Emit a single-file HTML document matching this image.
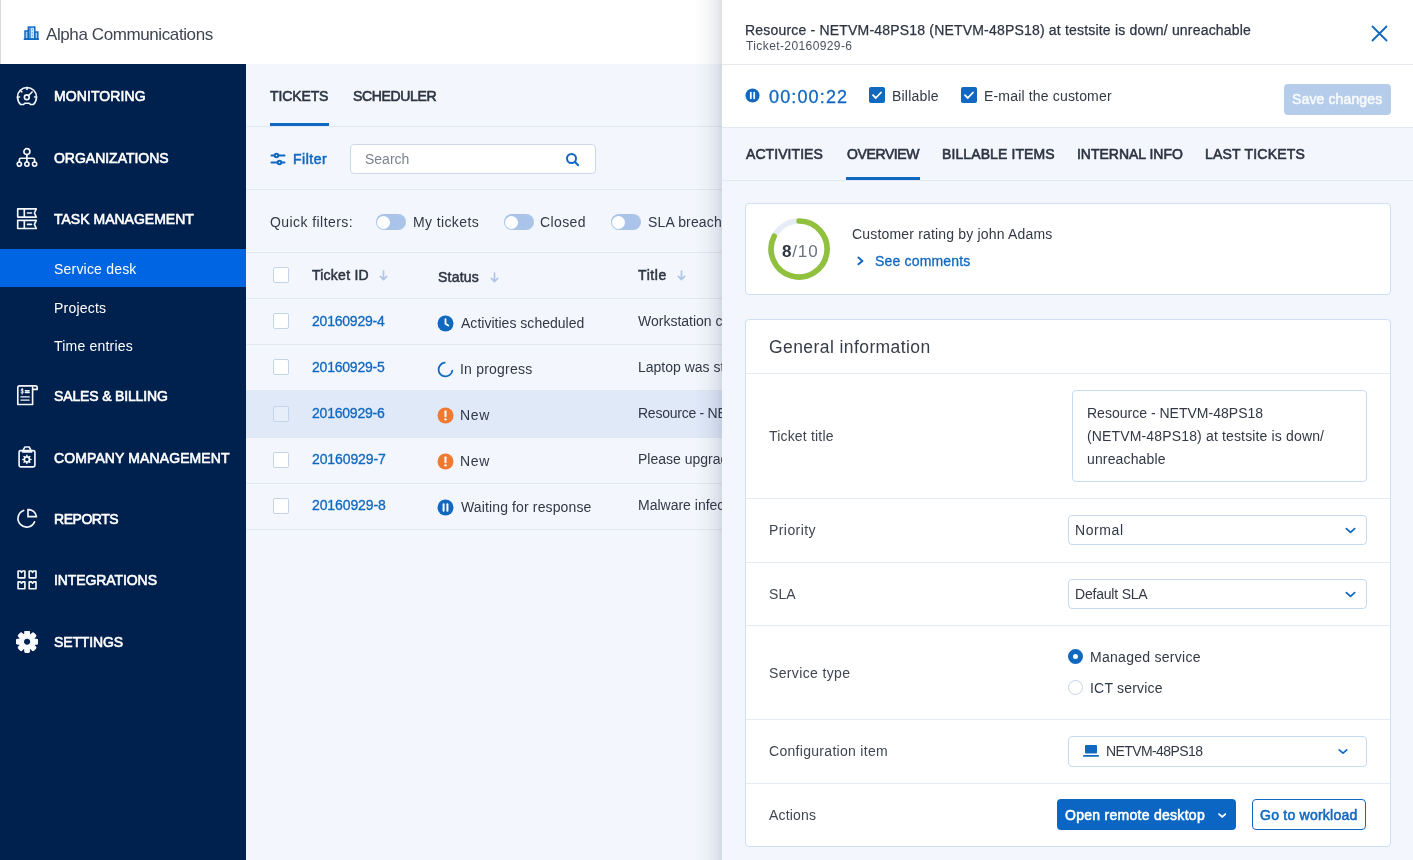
<!DOCTYPE html>
<html lang="en">
<head>
<meta charset="utf-8">
<title>Service desk</title>
<style>
*{box-sizing:border-box;margin:0;padding:0}
html,body{width:1413px;height:860px;overflow:hidden;background:#f3f7fd;font-family:"Liberation Sans",sans-serif;color:#323845}
.abs,.t{position:absolute}
.t{white-space:nowrap;line-height:20px;font-size:14px;transform:translateY(-50%);will-change:transform}
#top{left:0;top:0;width:722px;height:64px;background:#fff;border-left:1px solid #d9dde3}
#side{left:0;top:64px;width:246px;height:796px;background:#00204d}
#side .active{left:0;top:185px;width:246px;height:38px;background:#0065e3}
#side .nav{left:54px;color:#fff;font-size:14px;letter-spacing:.55px;-webkit-text-stroke:.6px #fff}
#side .sub{left:54px;color:#fff;font-size:14px;letter-spacing:.2px}
#side svg{position:absolute;left:16px;width:22px;height:22px;fill:none;stroke:#f4f7fb;stroke-width:1.650;stroke-linecap:round;stroke-linejoin:round}
#main{left:246px;top:64px;width:476px;height:796px;background:#f3f7fd}
.hl{position:absolute;left:0;width:476px;height:1px;background:#e1e8f2}
.cb{position:absolute;width:16px;height:16px;border:1px solid #c4d3e8;border-radius:2px;background:#fff}
.link{color:#1168c0}
#panel{left:722px;top:0;width:691px;height:860px;background:#f3f7fd;}
#shadow{left:694px;top:0;width:28px;height:860px;background:linear-gradient(to right,rgba(30,45,80,0),rgba(30,45,80,.035) 45%,rgba(30,45,80,.085) 78%,rgba(30,45,80,.15))}
.tab{font-size:14px;letter-spacing:.4px;color:#2d3442;-webkit-text-stroke:.6px #2d3442}
.tg{position:absolute;width:30px;height:16px;border-radius:8px;background:#a9c4e8;margin-left:.5px}
.tg i{position:absolute;left:1.500px;top:1.500px;width:13px;height:13px;border-radius:7px;background:#fff}
.th{color:#2d3442;-webkit-text-stroke:.5px #2d3442}
.arr{position:absolute;width:9px;height:11px;fill:none;stroke:#b0c6e6;stroke-width:1.900;stroke-linecap:round;stroke-linejoin:round}
.id{color:#1168c0;-webkit-text-stroke:.3px #1168c0}
.si{position:absolute;left:190.500px;width:17px;height:17px}
.chk{position:absolute;width:16px;height:16px}
.card{position:absolute;left:23px;width:646px;background:#fff;border:1px solid #cfdff3;border-radius:4px}
.dv{position:absolute;left:24px;width:644px;height:1px;background:#e6ecf5}
.lb{left:47px;color:#3f4552}
.inp{position:absolute;background:#fff;border:1px solid #c6daf2;border-radius:4px}
.chv{position:absolute;width:11px;height:7px;fill:none;stroke:#1168c0;stroke-width:2;stroke-linecap:round;stroke-linejoin:round}
</style>
</head>
<body>
<div id="top" class="abs">
  <svg class="abs" style="left:22px;top:26px" width="17" height="14" viewBox="0 0 17 14" fill="#9fd0fb" stroke="#1168c0" stroke-width="1.500"><rect x="2" y="5" width="3.500" height="8"/><rect x="11.500" y="6" width="3.300" height="7"/><rect x="5.300" y="1.100" width="6.500" height="12" fill="#cfe8ff"/><path d="M7 2v11" stroke-width="1.200" fill="none"/><path d="M.7 13.200h15.300" fill="none" stroke-width="1.500"/><path d="M9.400 3.500v8.500" stroke-width="1.100" stroke-dasharray=".8 2.200" fill="none"/></svg>
  <span class="t" style="left:45.1px;top:35px;font-size:17px;color:#3e4552;letter-spacing:-0.40px">Alpha Communications</span>
</div>

<div id="side" class="abs">
  <div class="abs active"></div>
  <svg style="top:21px" viewBox="0 0 22 22"><path d="M4.600 19.500C2.600 17.600 1.500 15 1.500 12a9.500 9.500 0 0 1 19 0c0 3-1.100 5.600-3.100 7.500h-3l-1.200-1.300H8.800L7.600 19.500z"/><circle cx="10.800" cy="12.200" r="2.400"/><path d="M12.600 10.500l3.500-3.500M1.500 12h2M18.500 12h2M11 2.500v2M4.500 5.500l1.300 1.300"/></svg>
  <svg style="top:83px" viewBox="0 0 22 22"><circle cx="10.900" cy="4.600" r="3"/><circle cx="3.300" cy="17.100" r="2.100"/><circle cx="10.900" cy="17.100" r="2.100"/><circle cx="18.600" cy="17.100" r="2.100"/><path d="M10.900 7.600V15M3.300 15v-2.300a1.500 1.500 0 0 1 1.500-1.500h12.300a1.500 1.500 0 0 1 1.500 1.500V15"/></svg>
  <svg style="top:144px" viewBox="0 0 22 22" stroke-linejoin="miter"><path d="M1.700 .9H20.300L18.400 5l1.900 4.100H1.700zM8.300 .9V9.100M11.500 5h4M1.700 12.300H20.300L18.400 16.400l1.900 4.100H1.700zM8.300 12.300v8.200M11.500 16.400h4"/></svg>
  <svg style="top:321px" viewBox="0 0 22 22"><path d="M16.600 4.400V19.500H1.800V2.500a1.600 1.600 0 0 1 1.600-1.600H19.500a1.700 1.700 0 0 1 1.700 1.700v1.800h-4.600V2.600"/><path d="M5 11.900h8.200M5 15.100h8.200M9.300 5.800h3.900M9.300 7.500h3.900" stroke-width="1.400"/><path d="M7.300 4.600c-.5-.6-2.300-.5-2.300.5 0 1.200 2.500.7 2.500 2 0 1-1.900 1.100-2.600.4M6.200 3.500v5.600" stroke-width="1"/></svg>
  <svg style="top:382px" viewBox="0 0 22 22"><rect x="3.100" y="4.600" width="15.800" height="16.200" rx="1.500"/><path d="M6.400 5.800L8.800 1h4.400l2.500 4.800z"/><circle cx="10.900" cy="13.400" r="2.500" stroke-width="1.600"/><path d="M10.900 9.300v1M10.900 16.500v1M6.800 13.400h1M14 13.400h1M8 10.500l.7.700M13.100 15.600l.7.700M13.800 10.500l-.7.700M8.700 15.600l-.7.700" stroke-width="1.500"/></svg>
  <svg style="top:444px" viewBox="0 0 22 22"><path d="M7.660 2.420A8.600 8.600 0 1 0 18.530 13.830"/><path d="M12 8.600V1.600a8 8 0 0 1 8.400 7z" stroke-linejoin="miter"/></svg>
  <svg style="top:505px" viewBox="0 0 22 22" stroke-linejoin="miter" stroke-linecap="butt" stroke-width="2"><path d="M2.100 2h2.400l1 1.300 1-1.300h2.400v6.800H2.100zM13.200 2h2.400l1 1.300 1-1.300H20v6.800h-6.800zM2.100 12.900h2.400l1 1.300 1-1.300h2.400v6.800H2.100zM13.200 12.900h2.400l1 1.300 1-1.300H20v6.800h-6.800z"/></svg>
  <svg style="top:567px" viewBox="-11.100 -10.700 22 22" stroke="none"><g fill="#fff"><circle r="7.500"/><rect x="-2.100" y="-10.500" width="4.200" height="5" rx="1" transform="rotate(0)"/><rect x="-2.100" y="-10.500" width="4.200" height="5" rx="1" transform="rotate(45)"/><rect x="-2.100" y="-10.500" width="4.200" height="5" rx="1" transform="rotate(90)"/><rect x="-2.100" y="-10.500" width="4.200" height="5" rx="1" transform="rotate(135)"/><rect x="-2.100" y="-10.500" width="4.200" height="5" rx="1" transform="rotate(180)"/><rect x="-2.100" y="-10.500" width="4.200" height="5" rx="1" transform="rotate(225)"/><rect x="-2.100" y="-10.500" width="4.200" height="5" rx="1" transform="rotate(270)"/><rect x="-2.100" y="-10.500" width="4.200" height="5" rx="1" transform="rotate(315)"/></g><circle r="3.900" fill="#00204d"/></svg>
  <span class="t nav" style="top:32px;letter-spacing:0.10px">MONITORING</span>
  <span class="t nav" style="top:94px;letter-spacing:-0.02px">ORGANIZATIONS</span>
  <span class="t nav" style="top:155px;letter-spacing:0.01px">TASK MANAGEMENT</span>
  <span class="t sub" style="top:205px;letter-spacing:0.20px">Service desk</span>
  <span class="t sub" style="top:244px;letter-spacing:0.20px">Projects</span>
  <span class="t sub" style="top:282px;letter-spacing:0.20px">Time entries</span>
  <span class="t nav" style="top:332px;letter-spacing:-0.15px">SALES &amp; BILLING</span>
  <span class="t nav" style="top:394px;letter-spacing:0.11px">COMPANY MANAGEMENT</span>
  <span class="t nav" style="top:455px;letter-spacing:-0.46px">REPORTS</span>
  <span class="t nav" style="top:516px;letter-spacing:-0.09px">INTEGRATIONS</span>
  <span class="t nav" style="top:578px;letter-spacing:-0.13px">SETTINGS</span>
</div>

<div id="main" class="abs">
  <span class="t tab" style="left:24.1px;top:32px;letter-spacing:-0.11px">TICKETS</span>
  <span class="t tab" style="left:106.5px;top:32px;letter-spacing:-0.34px">SCHEDULER</span>
  <div class="abs" style="left:24px;top:59px;width:59px;height:3px;background:#1168c0"></div>
  <div class="hl" style="top:62px"></div>
  <svg class="abs" style="left:24px;top:87px" width="16" height="16" viewBox="0 0 16 16" fill="none" stroke="#1168c0" stroke-width="2" stroke-linecap="round"><path d="M1.5 4.5h3M8.5 4.5h6M1.5 11.5h6M11.5 11.5h3"/><circle cx="6.5" cy="4.5" r="1.8"/><circle cx="9.5" cy="11.5" r="1.8"/></svg>
  <span class="t link" style="left:46.5px;top:95px;-webkit-text-stroke:.55px #1168c0;letter-spacing:0.50px">Filter</span>
  <div class="abs" style="left:104px;top:80px;width:246px;height:30px;background:#fff;border:1px solid #cbd8ea;border-radius:4px"></div>
  <span class="t" style="left:119.0px;top:95px;color:#7b838f;letter-spacing:0.00px">Search</span>
  <svg class="abs" style="left:319px;top:88px" width="15" height="15" viewBox="0 0 15 15" fill="none" stroke="#1168c0" stroke-width="2" stroke-linecap="round"><circle cx="6.5" cy="6.5" r="4.5"/><path d="M10 10l3.2 3.2"/></svg>
  <div class="hl" style="top:125px"></div>
  <span class="t" style="left:23.5px;top:158px;letter-spacing:0.43px">Quick filters:</span>
  <div class="tg" style="left:129px;top:150px"><i></i></div>
  <span class="t" style="left:166.7px;top:158px;letter-spacing:0.38px">My tickets</span>
  <div class="tg" style="left:257px;top:150px"><i></i></div>
  <span class="t" style="left:294.0px;top:158px;letter-spacing:0.40px">Closed</span>
  <div class="tg" style="left:364px;top:150px"><i></i></div>
  <span class="t" style="left:402px;top:158px;letter-spacing:0.15px">SLA breach</span>
  <div class="hl" style="top:188px"></div>

  <div class="abs" style="left:0;top:327px;width:476px;height:46px;background:#dfe9f8"></div>
  <div class="hl" style="top:234px"></div>
  <div class="hl" style="top:280px"></div>
  <div class="hl" style="top:326px"></div>
  <div class="hl" style="top:373px"></div>
  <div class="hl" style="top:419px"></div>
  <div class="hl" style="top:465px"></div>

  <div class="cb" style="left:27px;top:203px"></div>
  <span class="t th" style="left:66.0px;top:211px;letter-spacing:0.24px">Ticket ID</span>
  <span class="t th" style="left:192.0px;top:213px;letter-spacing:0.22px">Status</span>
  <span class="t th" style="left:392.0px;top:211px;letter-spacing:0.61px">Title</span>
  <svg class="arr" style="left:133px;top:206px" viewBox="0 0 10 12"><path d="M5 1v9.5M1.5 7L5 10.5 8.500 7"/></svg>
  <svg class="arr" style="left:244px;top:208px" viewBox="0 0 10 12"><path d="M5 1v9.5M1.5 7L5 10.5 8.500 7"/></svg>
  <svg class="arr" style="left:431px;top:206px" viewBox="0 0 10 12"><path d="M5 1v9.5M1.5 7L5 10.5 8.500 7"/></svg>

  <div class="cb" style="left:27px;top:249px"></div>
  <div class="cb" style="left:27px;top:295px"></div>
  <div class="cb" style="left:27px;top:342px;background:#e6eefa"></div>
  <div class="cb" style="left:27px;top:388px"></div>
  <div class="cb" style="left:27px;top:434px"></div>
  <span class="t id" style="left:66.0px;top:257px;letter-spacing:-0.22px">20160929-4</span>
  <span class="t id" style="left:66.0px;top:303px;letter-spacing:-0.22px">20160929-5</span>
  <span class="t id" style="left:66.0px;top:349px;letter-spacing:-0.22px">20160929-6</span>
  <span class="t id" style="left:66.0px;top:395px;letter-spacing:-0.11px">20160929-7</span>
  <span class="t id" style="left:66.0px;top:441px;letter-spacing:-0.11px">20160929-8</span>

  <svg class="si" style="top:251px" viewBox="0 0 16 16"><circle cx="8" cy="8" r="7.5" fill="#1168c0"/><path d="M8 4v4.3l2.6 1.6" fill="none" stroke="#fff" stroke-width="1.7" stroke-linecap="round"/></svg>
  <svg class="si" style="top:297px" viewBox="0 0 16 16"><path d="M7.2 1.6A6.5 6.500 0 1 0 14.400 9" fill="none" stroke="#1168c0" stroke-width="1.7" stroke-linecap="round"/></svg>
  <svg class="si" style="top:343px" viewBox="0 0 16 16"><circle cx="8" cy="8" r="7.5" fill="#f27a30"/><path d="M8 4v4.600" stroke="#fff" stroke-width="1.9" stroke-linecap="round"/><circle cx="8" cy="11.600" r="1.100" fill="#fff"/></svg>
  <svg class="si" style="top:389px" viewBox="0 0 16 16"><circle cx="8" cy="8" r="7.5" fill="#f27a30"/><path d="M8 4v4.600" stroke="#fff" stroke-width="1.9" stroke-linecap="round"/><circle cx="8" cy="11.600" r="1.100" fill="#fff"/></svg>
  <svg class="si" style="top:435px" viewBox="0 0 16 16"><circle cx="8" cy="8" r="7.5" fill="#1168c0"/><path d="M6.200 5v6M9.800 5v6" stroke="#fff" stroke-width="1.900" stroke-linecap="round"/></svg>
  <span class="t" style="left:215.0px;top:259px;letter-spacing:0.02px">Activities scheduled</span>
  <span class="t" style="left:214.0px;top:305px;letter-spacing:0.21px">In progress</span>
  <span class="t" style="left:214.0px;top:351px;letter-spacing:0.65px">New</span>
  <span class="t" style="left:214.0px;top:397px;letter-spacing:0.65px">New</span>
  <span class="t" style="left:215.0px;top:443px;letter-spacing:0.13px">Waiting for response</span>
  <span class="t" style="left:392px;top:257px">Workstation crashed</span>
  <span class="t" style="left:392px;top:303px">Laptop was stolen</span>
  <span class="t" style="left:392px;top:349px;letter-spacing:-.25px">Resource - NETVM</span>
  <span class="t" style="left:392px;top:395px">Please upgrade</span>
  <span class="t" style="left:392px;top:441px">Malware infection</span>
</div>

<div id="shadow" class="abs"></div>
<div id="panel" class="abs">
  <div class="abs" style="left:0;top:0;width:691px;height:128px;background:#fff"></div>
  <div class="abs" style="left:0;top:64px;width:691px;height:1px;background:#e6e9ee"></div>
  <div class="abs" style="left:0;top:127px;width:691px;height:1px;background:#e3e9f2"></div>
  <div class="abs" style="left:0;top:180px;width:691px;height:1px;background:#e1e8f2"></div>
  <span class="t" style="left:22.5px;top:30px;color:#2d3442;-webkit-text-stroke:.25px #2d3442;letter-spacing:0.19px">Resource - NETVM-48PS18 (NETVM-48PS18) at testsite is down/ unreachable</span>
  <span class="t" style="left:23.5px;top:46px;font-size:12px;color:#4a515e;letter-spacing:0.40px">Ticket-20160929-6</span>
  <svg class="abs" style="left:649px;top:25px" width="17" height="17" viewBox="0 0 17 17" fill="none" stroke="#1168c0" stroke-width="1.800" stroke-linecap="round"><path d="M1.500 1.500l14 14M15.500 1.500l-14 14"/></svg>

  <svg class="abs" style="left:23px;top:88px" width="15" height="15" viewBox="0 0 16 16"><circle cx="8" cy="8" r="7.500" fill="#1168c0"/><path d="M6.200 5v6M9.800 5v6" stroke="#fff" stroke-width="1.900" stroke-linecap="round"/></svg>
  <span class="t" style="left:46.5px;top:97px;font-size:18px;color:#1168c0;-webkit-text-stroke:.3px #1168c0;letter-spacing:1.14px">00:00:22</span>
  <svg class="chk" style="left:147px;top:87px" viewBox="0 0 16 16"><rect width="16" height="16" rx="2" fill="#1168c0"/><path d="M4 8.200l2.800 2.800L12 5.500" fill="none" stroke="#fff" stroke-width="1.800" stroke-linecap="round" stroke-linejoin="round"/></svg>
  <span class="t" style="left:169.5px;top:96px;letter-spacing:0.21px">Billable</span>
  <svg class="chk" style="left:239px;top:87px" viewBox="0 0 16 16"><rect width="16" height="16" rx="2" fill="#1168c0"/><path d="M4 8.200l2.800 2.800L12 5.500" fill="none" stroke="#fff" stroke-width="1.800" stroke-linecap="round" stroke-linejoin="round"/></svg>
  <span class="t" style="left:262.0px;top:96px;letter-spacing:0.17px">E-mail the customer</span>
  <div class="abs" style="left:562px;top:84px;width:107px;height:31px;border-radius:4px;background:#b5cdea"></div>
  <span class="t" style="left:569.5px;top:99px;color:#fff;-webkit-text-stroke:.55px #fff;opacity:.9;letter-spacing:0.13px">Save changes</span>

  <span class="t tab" style="left:23.5px;top:154px;letter-spacing:0.07px">ACTIVITIES</span>
  <span class="t tab" style="left:124.5px;top:154px;letter-spacing:-0.38px">OVERVIEW</span>
  <span class="t tab" style="left:220.0px;top:154px;letter-spacing:0.10px">BILLABLE ITEMS</span>
  <span class="t tab" style="left:354.6px;top:154px;letter-spacing:-0.02px">INTERNAL INFO</span>
  <span class="t tab" style="left:483.0px;top:154px;letter-spacing:0.21px">LAST TICKETS</span>
  <div class="abs" style="left:124px;top:177px;width:74px;height:3px;background:#1168c0"></div>

  <div class="card" style="top:203px;height:92px"></div>
  <svg class="abs" style="left:45px;top:217px" width="64" height="64" viewBox="0 0 64 64" fill="none" stroke-width="5.600"><circle cx="32.100" cy="32" r="28" stroke="#e6ecf6"/><path d="M32.100 4A28 28 0 1 1 7.150 19.290" stroke="#90c03c" stroke-linecap="round"/></svg>
  <span class="t" style="left:59.5px;top:252px;font-size:17px;color:#6b7280;letter-spacing:0.84px"><b style="color:#2d3442">8</b>/10</span>
  <span class="t" style="left:129.6px;top:234px;letter-spacing:0.18px">Customer rating by john Adams</span>
  <svg class="abs" style="left:134px;top:255px" width="8" height="11" viewBox="0 0 8 11" fill="none" stroke="#1168c0" stroke-width="2" stroke-linecap="round" stroke-linejoin="round"><path d="M2.400 2.600l4 3.300-4 3.300"/></svg>
  <span class="t link" style="left:152.5px;top:261px;-webkit-text-stroke:.3px #1168c0;letter-spacing:0.18px">See comments</span>

  <div class="card" style="top:318.500px;height:528.500px"></div>
  <span class="t" style="left:46.5px;top:347px;font-size:17.5px;color:#363c48;letter-spacing:0.42px">General information</span>
  <div class="dv" style="top:373px"></div>
  <div class="dv" style="top:498px"></div>
  <div class="dv" style="top:562px"></div>
  <div class="dv" style="top:625px"></div>
  <div class="dv" style="top:719px"></div>
  <div class="dv" style="top:783px"></div>
  <span class="t lb" style="top:436px;letter-spacing:0.18px">Ticket title</span>
  <span class="t lb" style="top:530px;letter-spacing:0.43px">Priority</span>
  <span class="t lb" style="top:594px;letter-spacing:0.05px">SLA</span>
  <span class="t lb" style="top:673px;letter-spacing:0.36px">Service type</span>
  <span class="t lb" style="top:751px;letter-spacing:0.30px">Configuration item</span>
  <span class="t lb" style="top:815px;letter-spacing:0.17px">Actions</span>

  <div class="inp" style="left:350px;top:390px;width:295px;height:92px"></div>
  <span class="t" style="left:364.6px;top:413px;letter-spacing:0.01px">Resource - NETVM-48PS18</span>
  <span class="t" style="left:364.6px;top:436px;letter-spacing:0.15px">(NETVM-48PS18) at testsite is down/</span>
  <span class="t" style="left:364.6px;top:459px;letter-spacing:0.14px">unreachable</span>

  <div class="inp" style="left:346px;top:514.500px;width:299px;height:30.500px"></div>
  <span class="t" style="left:353.0px;top:530px;letter-spacing:0.60px">Normal</span>
  <svg class="chv" style="left:623px;top:527px" viewBox="0 0 12 7"><path d="M1.500 1.500L6 5.500l4.500-4"/></svg>
  <div class="inp" style="left:346px;top:578.500px;width:299px;height:30.500px"></div>
  <span class="t" style="left:353.0px;top:594px;letter-spacing:-0.20px">Default SLA</span>
  <svg class="chv" style="left:623px;top:591px" viewBox="0 0 12 7"><path d="M1.500 1.500L6 5.500l4.500-4"/></svg>

  <div class="abs" style="left:346px;top:649px;width:15px;height:15px;border-radius:50%;border:5px solid #1168c0;background:#fff"></div>
  <span class="t" style="left:368.0px;top:657px;letter-spacing:0.28px">Managed service</span>
  <div class="abs" style="left:346px;top:680px;width:15px;height:15px;border-radius:50%;border:1px solid #c4d3e8;background:#fff"></div>
  <span class="t" style="left:368.0px;top:688px;letter-spacing:0.20px">ICT service</span>

  <div class="inp" style="left:346px;top:736px;width:299px;height:31px"></div>
  <svg class="abs" style="left:361px;top:745px" width="16" height="12" viewBox="0 0 16 12"><rect x="2" y="0" width="12" height="8.500" rx="1" fill="#1168c0"/><rect x="0" y="10" width="16" height="1.800" rx=".9" fill="#1168c0"/></svg>
  <span class="t" style="left:383.5px;top:751px;letter-spacing:-0.59px">NETVM-48PS18</span>
  <svg class="chv" style="left:616px;top:748px;width:10px" viewBox="0 0 12 7"><path d="M1.500 1.500L6 5.500l4.500-4"/></svg>

  <div class="abs" style="left:335px;top:799px;width:179px;height:31px;border-radius:4px;background:#0b66c3"></div>
  <span class="t" style="left:343.0px;top:815px;color:#fff;-webkit-text-stroke:.55px #fff;letter-spacing:0.28px">Open remote desktop</span>
  <svg class="chv" style="left:495.500px;top:812px;width:8.500px;stroke:#fff;stroke-width:2.600" viewBox="0 0 12 7"><path d="M1.500 1.500L6 5.500l4.500-4"/></svg>
  <div class="abs" style="left:530px;top:799px;width:114px;height:31px;border-radius:4px;background:#fff;border:1px solid #1168c0"></div>
  <span class="t link" style="left:538.0px;top:815px;-webkit-text-stroke:.55px #1168c0;letter-spacing:0.24px">Go to workload</span>
</div>
</body>
</html>
